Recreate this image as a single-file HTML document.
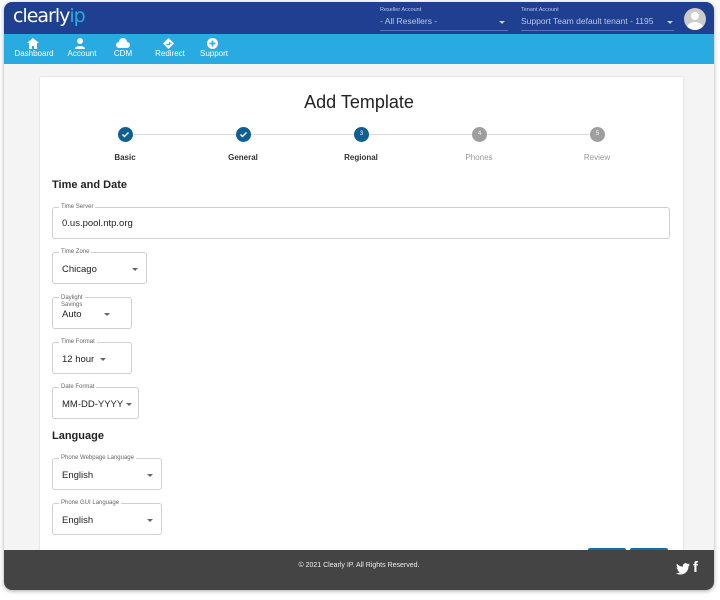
<!DOCTYPE html>
<html><head><style>
*{margin:0;padding:0;box-sizing:border-box}
body{width:720px;height:600px;background:#fff;font-family:"Liberation Sans",sans-serif;position:relative;overflow:hidden}
.win{position:absolute;left:4px;top:2px;width:710px;height:588px;border-radius:8px;overflow:hidden;background:#f4f4f4;box-shadow:0 1px 4px rgba(0,0,0,.35)}
.a{position:absolute}
.hdr{left:0;top:0;width:710px;height:32px;background:#1f3f91}
.nav{left:0;top:32px;width:710px;height:30px;background:#29abe2}
.ni{position:absolute;top:47px;color:#fff;font-size:8px;text-align:center}
.ic{position:absolute;top:36px}
.card{left:36px;top:75px;width:643px;height:480px;background:#fff;box-shadow:0 0 2px rgba(0,0,0,.15)}
.dot{position:absolute;width:15px;height:15px;border-radius:50%;background:#0f5f92;color:#fff;font-size:6px;text-align:center;line-height:15px}
.lab{position:absolute;font-size:8px;color:#333;width:80px;text-align:center;top:151px}
.f{position:absolute;border:1px solid #cfcfcf;border-radius:3px;background:#fff}
.fl{position:absolute;top:-5px;left:6px;background:#fff;padding:0 2px;font-size:6px;color:#666;line-height:8px}
.fv{position:absolute;left:9px;font-size:9.5px;color:#222}
.car{position:absolute;width:0;height:0;border-left:3px solid transparent;border-right:3px solid transparent;border-top:3px solid #666}
h3{position:absolute;font-size:11px;font-weight:bold;color:#222}
</style></head><body>
<div class="win">
<div class="a hdr"></div>
<div class="a" style="left:9px;top:3px;color:#fff;font-size:19px;font-family:'DejaVu Sans',sans-serif;letter-spacing:-1px">clearly<span style="color:#29abe2">ip</span></div>
<div class="a" style="left:376px;top:5px;font-size:5.5px;color:#bcc8e6">Reseller Account</div>
<div class="a" style="left:376px;top:14px;font-size:8.5px;color:#bcc8e6">- All Resellers -</div>
<div class="car" style="left:495px;top:19px;border-top-color:#ccd"></div>
<div class="a" style="left:376px;top:28px;width:128px;height:1px;background:#5a73b3"></div>
<div class="a" style="left:517px;top:5px;font-size:5.5px;color:#bcc8e6">Tenant Account</div>
<div class="a" style="left:517px;top:14px;font-size:8.5px;color:#bcc8e6">Support Team default tenant - 1195</div>
<div class="car" style="left:663px;top:19px;border-top-color:#ccd"></div>
<div class="a" style="left:517px;top:28px;width:153px;height:1px;background:#5a73b3"></div>
<div class="a" style="left:680px;top:6px;width:22px;height:22px;border-radius:50%;background:#ccc;overflow:hidden"><div class="a" style="left:7px;top:4px;width:8px;height:8px;border-radius:50%;background:#fff"></div><div class="a" style="left:3px;top:14px;width:16px;height:12px;border-radius:50%;background:#fff"></div></div>
<div class="a nav"></div>
<svg class="ic" style="left:23px" width="12" height="11" viewBox="0 0 12 11"><path d="M6 0L0 5h2v6h3V8h2v3h3V5h2z" fill="#fff"/></svg>
<svg class="ic" style="left:70px" width="12" height="11" viewBox="0 0 12 11"><circle cx="6" cy="3" r="3" fill="#fff"/><path d="M1 11c0-4 10-4 10 0z" fill="#fff"/></svg>
<svg class="ic" style="left:112px" width="14" height="11" viewBox="0 0 14 11"><path d="M3 10a3 3 0 010-6 4 4 0 018-0a3 3 0 010 6z" fill="#fff"/></svg>
<svg class="ic" style="left:159px" width="11" height="11" viewBox="0 0 11 11"><path d="M5.5 0L11 5.5 5.5 11 0 5.5z" fill="#fff"/><path d="M3.5 6.5h3v-2l2 1.5" stroke="#29abe2" fill="none"/></svg>
<svg class="ic" style="left:203px" width="11" height="11" viewBox="0 0 11 11"><circle cx="5.5" cy="5.5" r="5.5" fill="#fff"/><path d="M5.5 2.5v6M2.5 5.5h6" stroke="#29abe2" stroke-width="1.6"/></svg>
<div class="ni" style="left:8px;width:44px">Dashboard</div>
<div class="ni" style="left:58px;width:40px">Account</div>
<div class="ni" style="left:104px;width:30px">CDM</div>
<div class="ni" style="left:146px;width:40px">Redirect</div>
<div class="ni" style="left:190px;width:40px">Support</div>
<div class="a card"></div>
<div class="a" style="left:0;top:90px;width:710px;text-align:center;font-size:18px;color:#222">Add Template</div>
<div class="a" style="left:130px;top:132px;width:462px;height:1px;background:#ddd"></div>
<div class="dot" style="left:114px;top:125px"><svg width="15" height="15" viewBox="0 0 15 15"><path d="M4.5 7.5l2 2 4-4" stroke="#fff" stroke-width="1.4" fill="none"/></svg></div>
<div class="dot" style="left:232px;top:125px"><svg width="15" height="15" viewBox="0 0 15 15"><path d="M4.5 7.5l2 2 4-4" stroke="#fff" stroke-width="1.4" fill="none"/></svg></div>
<div class="dot" style="left:350px;top:125px">3</div>
<div class="dot" style="left:468px;top:125px;background:#9e9e9e">4</div>
<div class="dot" style="left:586px;top:125px;background:#9e9e9e">5</div>
<div class="lab" style="left:81px;font-weight:bold">Basic</div>
<div class="lab" style="left:199px;font-weight:bold">General</div>
<div class="lab" style="left:317px;font-weight:bold">Regional</div>
<div class="lab" style="left:435px;color:#999">Phones</div>
<div class="lab" style="left:553px;color:#999">Review</div>
<h3 style="left:48px;top:177px">Time and Date</h3>
<div class="f" style="left:48px;top:205px;width:618px;height:32px"><span class="fl">Time Server</span><span class="fv" style="top:10px">0.us.pool.ntp.org</span></div>
<div class="f" style="left:48px;top:250px;width:95px;height:32px"><span class="fl">Time Zone</span><span class="fv" style="top:11px">Chicago</span><div class="car" style="left:79px;top:15px"></div></div>
<div class="f" style="left:48px;top:295px;width:80px;height:32px"><span class="fl" style="top:-3px;line-height:7px">Daylight<br>Savings</span><span class="fv" style="top:11px">Auto</span><div class="car" style="left:51px;top:15px"></div></div>
<div class="f" style="left:48px;top:340px;width:80px;height:32px"><span class="fl">Time Format</span><span class="fv" style="top:11px">12 hour</span><div class="car" style="left:47px;top:15px"></div></div>
<div class="f" style="left:48px;top:385px;width:87px;height:32px"><span class="fl">Date Format</span><span class="fv" style="top:11px">MM-DD-YYYY</span><div class="car" style="left:73px;top:15px"></div></div>
<h3 style="left:48px;top:428px">Language</h3>
<div class="f" style="left:48px;top:456px;width:110px;height:32px"><span class="fl">Phone Webpage Language</span><span class="fv" style="top:11px">English</span><div class="car" style="left:94px;top:15px"></div></div>
<div class="f" style="left:48px;top:501px;width:110px;height:32px"><span class="fl">Phone GUI Language</span><span class="fv" style="top:11px">English</span><div class="car" style="left:94px;top:15px"></div></div>
<div class="a" style="left:584px;top:546px;width:38px;height:4px;background:#0f6fb0;border-radius:2px"></div>
<div class="a" style="left:626px;top:546px;width:38px;height:4px;background:#0f6fb0;border-radius:2px"></div>
<div class="a" style="left:0;top:548px;width:710px;height:40px;background:#444"></div>
<div class="a" style="left:0;top:560px;width:710px;text-align:center;color:#eee;font-size:7px">© 2021 Clearly IP. All Rights Reserved.</div>
<svg class="a" style="left:672px;top:561px" width="14" height="12" viewBox="0 0 24 20"><path d="M24 2.4a10 10 0 01-2.8.8A5 5 0 0023.3.5a10 10 0 01-3.1 1.2A4.9 4.9 0 0011.8 6 14 14 0 011.7.9a4.9 4.9 0 001.5 6.6A4.9 4.9 0 011 6.9a4.9 4.9 0 003.9 4.8 5 5 0 01-2.2.1 4.9 4.9 0 004.6 3.4A9.9 9.9 0 010 17.2 14 14 0 007.5 19.4c9.1 0 14-7.5 14-14v-.6A10 10 0 0024 2.4z" fill="#fff"/></svg>
<div class="a" style="left:689px;top:557px;color:#fff;font-size:15px;font-weight:bold">f</div>
</div>
</body></html>
